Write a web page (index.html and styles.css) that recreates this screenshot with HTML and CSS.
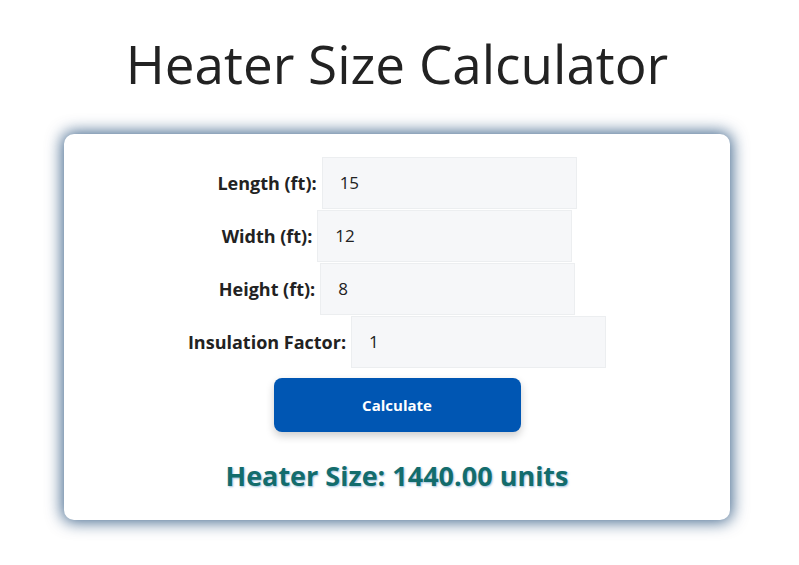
FILE: index.html
```html
<!DOCTYPE html>
<html lang="en">
<head>
    <meta charset="UTF-8">
    <meta name="viewport" content="width=device-width, initial-scale=1.0">
    <title>Heater Size Calculator</title>
    <link rel="stylesheet" href="styles.css">
</head>
<body>
    <h1>Heater Size Calculator</h1>
    <div class="calculator">
        <form id="heaterForm">
            <div class="form-row">
                <label for="length">Length (ft):</label>
                <input type="number" id="length" value="15">
            </div>
            <div class="form-row">
                <label for="width">Width (ft):</label>
                <input type="number" id="width" value="12">
            </div>
            <div class="form-row">
                <label for="height">Height (ft):</label>
                <input type="number" id="height" value="8">
            </div>
            <div class="form-row">
                <label for="insulation">Insulation Factor:</label>
                <input type="number" id="insulation" value="1">
            </div>
            <div class="button-row">
                <button type="button" onclick="calculateHeaterSize()">Calculate</button>
            </div>
        </form>
        <p id="result" class="result">Heater Size: 1440.00 units</p>
    </div>

    <script>
        function calculateHeaterSize() {
            const length = parseFloat(document.getElementById('length').value) || 0;
            const width = parseFloat(document.getElementById('width').value) || 0;
            const height = parseFloat(document.getElementById('height').value) || 0;
            const insulation = parseFloat(document.getElementById('insulation').value) || 0;
            const size = length * width * height * insulation;
            document.getElementById('result').innerText = `Heater Size: ${size.toFixed(2)} units`;
        }
    </script>
</body>
</html>
```

FILE: styles.css
```css
body {
    font-family: "Open Sans", Arial, sans-serif;
    background-color: #ffffff;
    color: #222222;
    margin: 0;
    padding: 0 5px 40px 0;
}
h1 {
    font-weight: 400;
    font-size: 53px;
    text-align: center;
    margin: 30px 0 35px;
    line-height: 1.3;
    color: #222222;
}
.calculator {
    background-color: #ffffff;
    width: 666px;
    margin: 0 auto;
    padding: 23px 0 26px;
    border-radius: 10px;
    box-shadow: 0 0 16px 2px rgba(0, 51, 102, 0.75); /* blue glow round the card */
    box-sizing: border-box;
    text-align: center;
}
.form-row {
    display: flex;
    justify-content: center;
    align-items: center;
    margin-bottom: 1px;
}
label {
    font-weight: bold;
    font-size: 18px;
    margin-right: 5px;
    color: #222222;
}
input[type="number"] {
    width: 255px;
    height: 52px;
    padding: 0 17px;
    font-family: inherit;
    font-size: 17px;
    color: #222222;
    background-color: #f6f7f9;
    border: 1px solid #eceef0;
    box-sizing: border-box;
    -moz-appearance: textfield;
}
input[type="number"]::-webkit-inner-spin-button,
input[type="number"]::-webkit-outer-spin-button {
    -webkit-appearance: none;
    margin: 0;
}
.button-row {
    margin-top: 10px;
}
button {
    background-color: #0056b3; /* blue button */
    color: #ffffff;
    width: 247px;
    height: 54px;
    border: none;
    border-radius: 8px;
    font-family: inherit;
    font-size: 15px;
    font-weight: bold;
    cursor: pointer;
    box-shadow: 0 4px 8px rgba(0, 0, 0, 0.2);
}
button:hover {
    background-color: #004494;
}
.result {
    font-size: 27px;
    font-weight: bold;
    color: #136c6c;
    text-shadow: 1px 1px 2px rgba(90, 150, 200, 0.6);
    margin: 25px 0 0;
}
```
